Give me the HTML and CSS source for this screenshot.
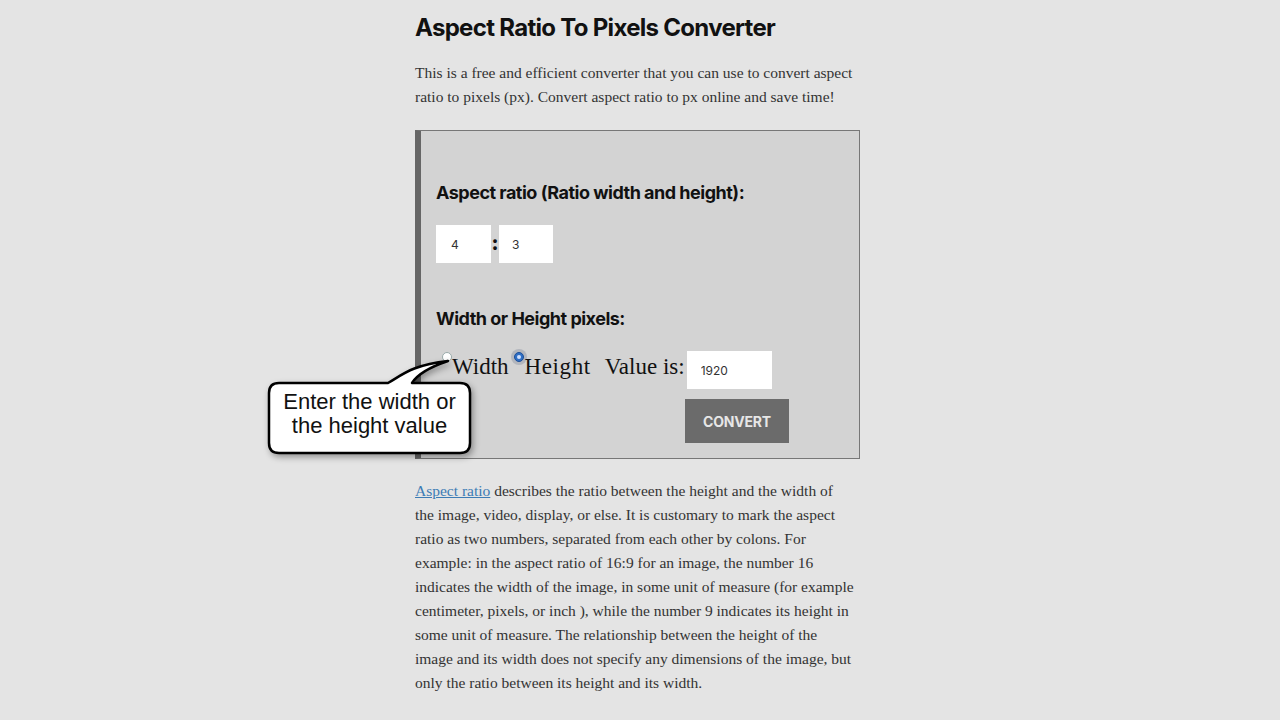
FILE: index.html
```html
<!DOCTYPE html>
<html lang="en">
<head>
<meta charset="utf-8">
<title>Aspect Ratio To Pixels Converter</title>
<link rel="stylesheet" href="styles.css">
</head>
<body>
<main class="page">
  <h1 class="title">Aspect Ratio To Pixels Converter</h1>
  <p class="intro">This is a free and efficient converter that you can use to convert aspect ratio to pixels (px). Convert aspect ratio to px online and save time!</p>

  <section class="converter">
    <h2 class="label">Aspect ratio (Ratio width and height):</h2>
    <div class="ratio-row">
      <input class="box box-a" type="text" value="4">
      <span class="colon">:</span>
      <input class="box box-b" type="text" value="3">
    </div>

    <h2 class="label label-2">Width or Height pixels:</h2>
    <div class="choice-row">
      <span class="radio"></span><span class="opt">Width</span>
      <span class="radio radio-on"><span class="dot"></span></span><span class="opt opt-height">Height</span>
      <span class="opt opt-value">Value is:</span>
      <input class="box box-val" type="text" value="1920">
    </div>
    <div class="btn-row">
      <button class="convert" type="button">CONVERT</button>
    </div>

    <div class="callout">
      <svg class="bubble" width="224" height="112" viewBox="0 0 224 112">
        <path d="M17 28 L126 28 C140 20 150 10 186 6 C168 12 155 20 150 28 L198 28 Q208 28 208 38 L208 88 Q208 98 198 98 L17 98 Q7 98 7 88 L7 38 Q7 28 17 28 Z" fill="#ffffff" stroke="#000000" stroke-width="2.5" stroke-linejoin="round"/>
      </svg>
      <div class="callout-text">Enter the width or<br>the height value</div>
    </div>
  </section>

  <p class="body-text"><a href="#" class="link">Aspect ratio</a> describes the ratio between the height and the width of the image, video, display, or else. It is customary to mark the aspect ratio as two numbers, separated from each other by colons. For example: in the aspect ratio of 16:9 for an image, the number 16 indicates the width of the image, in some unit of measure (for example centimeter, pixels, or inch ), while the number 9 indicates its height in some unit of measure. The relationship between the height of the image and its width does not specify any dimensions of the image, but only the ratio between its height and its width.</p>
</main>
</body>
</html>
```

FILE: styles.css
```css
html, body {
  margin: 0;
  padding: 0;
  background: #e4e4e4;
}

.page {
  width: 445px;
  margin-left: 415px;
  padding-top: 12px;
}

.title {
  font-family: Inter, "Liberation Sans", sans-serif;
  font-weight: 700;
  font-size: 24px;
  letter-spacing: -0.7px;
  line-height: 32px;
  color: #111;
  margin: 0 0 17px 0;
}

.intro, .body-text {
  font-family: "Liberation Serif", serif;
  font-size: 15.5px;
  line-height: 24px;
  color: #333;
  margin: 0;
}

.converter {
  position: relative;
  margin-top: 21px;
  box-sizing: border-box;
  height: 329px;
  background: #d3d3d3;
  border: 1px solid #777;
  border-left: 6px solid #666;
  padding: 50px 16px 0 15px;
}

.label {
  font-family: Inter, "Liberation Sans", sans-serif;
  font-weight: 700;
  font-size: 18px;
  letter-spacing: -0.5px;
  line-height: 24px;
  color: #111;
  margin: 0;
}

.label-2 {
  margin-top: 44px;
}

.ratio-row {
  display: flex;
  align-items: center;
  margin-top: 20px;
}

.box {
  box-sizing: border-box;
  height: 38px;
  border: none;
  background: #ffffff;
  font-family: Inter, "Liberation Sans", sans-serif;
  font-size: 12px;
  color: #333;
  padding: 0 0 0 14px;
  outline: none;
}

.box-a { width: 55px; padding-left: 15px; }
.box-b { width: 54px; padding-left: 13px; }
.box-val { width: 85px; padding-left: 14px; margin-left: 2px; }

.colon {
  font-family: Inter, "Liberation Sans", sans-serif;
  font-weight: 800;
  font-size: 20px;
  color: #111;
  width: 8px;
  text-align: center;
  margin-top: -3px;
}

.choice-row {
  display: flex;
  align-items: center;
  margin-top: 20px;
  margin-left: 6px;
}

.radio {
  box-sizing: border-box;
  width: 10px;
  height: 10px;
  border-radius: 50%;
  background: #fff;
  border: 1px solid #9aa;
  align-self: flex-start;
  margin-top: 1px;
  display: flex;
  align-items: center;
  justify-content: center;
}

.radio-on {
  background: #2f6fc4;
  border: 1px solid #1d4f99;
  box-shadow: 0 0 0 3px rgba(120, 130, 150, 0.35);
  margin-left: 5px;
}

.dot {
  width: 4px;
  height: 4px;
  border-radius: 50%;
  background: #cfe0ff;
}

.opt {
  font-family: "Liberation Serif", serif;
  font-size: 23px;
  color: #111;
  padding-bottom: 6px;
}

.opt-height {
  margin-left: 1px;
  letter-spacing: 0.6px;
}

.opt-value {
  margin-left: 14px;
}

.btn-row {
  display: flex;
  margin-top: 10px;
  padding-left: 249px;
}

.convert {
  width: 104px;
  height: 44px;
  background: #6b6b6b;
  border: none;
  color: #e6e6e6;
  font-family: Inter, "Liberation Sans", sans-serif;
  font-weight: 700;
  font-size: 14px;
  letter-spacing: -0.2px;
}

.callout {
  position: absolute;
  left: -159px;
  top: 224px;
  width: 224px;
  height: 112px;
}

.bubble {
  display: block;
  filter: drop-shadow(2px 3px 3px rgba(0, 0, 0, 0.35));
}

.callout-text {
  position: absolute;
  left: 7px;
  top: 35px;
  width: 201px;
  text-align: center;
  font-family: "Liberation Sans", Arial, sans-serif;
  font-size: 22px;
  line-height: 24px;
  color: #111;
}

.body-text {
  margin-top: 20px;
  width: 440px;
}

.link {
  color: #3d7cb5;
  text-decoration: underline;
}
```
